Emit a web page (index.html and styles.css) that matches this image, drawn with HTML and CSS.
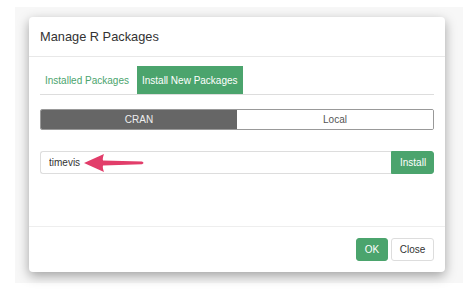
FILE: index.html
```html
<!DOCTYPE html>
<html lang="en">
<head>
  <meta charset="UTF-8" />
  <title>Manage R Packages</title>
  <link rel="stylesheet" href="styles.css">
</head>
<body>
  <div class="frame">
    <div class="dialog">
      <div class="dialog-header">
        <h4>Manage R Packages</h4>
      </div>

      <div class="dialog-body">
        <ul class="tabs">
          <li class="tab">Installed Packages</li>
          <li class="tab active">Install New Packages</li>
        </ul>

        <div class="segmented">
          <div class="seg on">CRAN</div>
          <div class="seg">Local</div>
        </div>

        <div class="input-group">
          <input type="text" value="timevis">
          <button class="btn-green btn-install">Install</button>
          <svg class="arrow" width="60" height="20" viewBox="0 0 60 20">
            <path d="M0 10 L20 1 C19 4 18.5 6 19 7.5 L58 8.6 C60 9.5 60 10.5 58 11.2 L19 12.5 C18.5 14 19 16 20 19 Z" fill="#e23d6a"/>
          </svg>
        </div>
      </div>

      <div class="dialog-footer">
        <button class="btn-green">OK</button>
        <button class="btn-default">Close</button>
      </div>
    </div>
  </div>
</body>
</html>
```

FILE: styles.css
```css
:root {
  --verde: #4ba46d;
  --cinza-texto: #333;
  --borda: #ddd;
}

body {
  margin: 0;
  background: #fff;
  font-family: "Liberation Sans", Arial, sans-serif;
  color: var(--cinza-texto);
}

.frame {
  margin: 7px 11px 8px 15px;
  padding: 10px 18px 11px 14px;
  background: #f7f7f7;
}

.dialog {
  height: 255px;
  display: flex;
  flex-direction: column;
  background: #fff;
  border-radius: 4px;
  box-shadow: 0 4px 12px rgba(0, 0, 0, 0.35);
  box-sizing: border-box;
}

.dialog-header {
  height: 40px;
  box-sizing: border-box;
  padding: 0 11px;
  border-bottom: 1px solid #e8e8e8;
  display: flex;
  align-items: center;
}

.dialog-header h4 {
  margin: 0;
  font-size: 12.8px;
  font-weight: normal;
  color: #333;
}

.dialog-body {
  flex: 1;
  padding: 9px 11px 0 11px;
}

.tabs {
  list-style: none;
  margin: 0;
  padding: 0;
  display: flex;
  gap: 3px;
  border-bottom: 1px solid var(--borda);
}

.tab {
  height: 28px;
  padding: 0 5px;
  display: flex;
  align-items: center;
  font-size: 10px;
  color: var(--verde);
}

.tab.active {
  background: var(--verde);
  color: #fff;
}

.segmented {
  margin-top: 14px;
  display: flex;
  height: 21px;
  border: 1px solid #999;
  border-radius: 2px;
  box-sizing: border-box;
  overflow: hidden;
}

.seg {
  flex: 1;
  display: flex;
  align-items: center;
  justify-content: center;
  font-size: 10px;
  color: #555;
  background: #fff;
}

.seg.on {
  background: #666;
  color: #eee;
}

.input-group {
  position: relative;
  margin-top: 21px;
  display: flex;
  height: 23px;
}

.input-group input {
  flex: 1;
  min-width: 0;
  height: 23px;
  box-sizing: border-box;
  border: 1px solid #ddd;
  border-right: none;
  border-radius: 3px 0 0 3px;
  padding: 0 8px;
  font-family: inherit;
  font-size: 10px;
  color: #333;
}

.btn-green,
.btn-default {
  height: 23px;
  padding: 0 8px;
  border-radius: 3px;
  font-family: inherit;
  font-size: 10px;
  box-sizing: border-box;
}

.btn-green {
  background: var(--verde);
  border: 1px solid var(--verde);
  color: #fff;
}

.btn-default {
  background: #fff;
  border: 1px solid #ddd;
  color: #333;
}

.btn-install {
  width: 43px;
  border-radius: 0 3px 3px 0;
}

.arrow {
  position: absolute;
  left: 44px;
  top: 2px;
}

.dialog-footer {
  height: 46px;
  box-sizing: border-box;
  border-top: 1px solid #eee;
  display: flex;
  justify-content: flex-end;
  align-items: center;
  gap: 3px;
  padding: 0 11px;
}

.dialog-footer .btn-green {
  width: 32px;
  padding: 0;
}

.dialog-footer .btn-default {
  width: 43px;
  padding: 0;
}
```
